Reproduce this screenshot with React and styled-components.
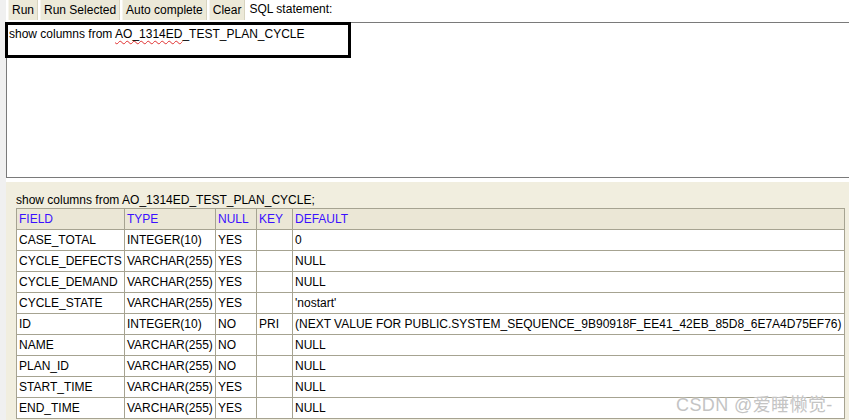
import React from 'react';
import styled, { createGlobalStyle } from 'styled-components';

const GlobalStyle = createGlobalStyle`
  html, body {
    margin: 0;
    padding: 0;
    background: #ffffff;
    overflow: hidden;
  }
  body {
    font-family: "Liberation Sans", Arial, sans-serif;
    font-size: 12px;
    color: #000;
  }
  *, *::before, *::after {
    box-sizing: border-box;
  }
`;

const Page = styled.div`
  position: relative;
  display: flex;
  width: 849px;
  height: 420px;
  overflow: hidden;
`;

const Gutter = styled.div`
  flex: 0 0 6px;
  background: #f0f0f0;
`;

const Main = styled.div`
  flex: 1 1 auto;
  display: flex;
  flex-direction: column;
  min-width: 0;
`;

const Toolbar = styled.div`
  flex: 0 0 22px;
  display: flex;
  align-items: flex-start;
  padding-left: 2px;
  gap: 2px;
`;

const ToolButton = styled.button`
  font-family: "Liberation Sans", Arial, sans-serif;
  font-size: 12px;
  color: #000;
  background: #ece9d8;
  border: none;
  border-left: 1px solid #f6f4ec;
  border-right: 1px solid #d8d4c0;
  padding: 0 3px;
  height: 20px;
  margin: 0;
  line-height: 20px;
`;

const ToolLabel = styled.span`
  line-height: 19px;
  padding-left: 2px;
`;

const Editor = styled.div`
  position: relative;
  flex: 0 0 156px;
  border-top: 1px solid #7a7a7a;
  border-left: 1px solid #7a7a7a;
  border-bottom: 1px solid #7a7a7a;
  padding: 4px 2px;
  background: #fff;
`;

const Squiggle = styled.span`
  text-decoration: underline wavy #e03030;
  text-decoration-thickness: 1px;
  text-underline-offset: 2px;
`;

const Annotation = styled.div`
  position: absolute;
  left: -2px;
  top: -1px;
  width: 346px;
  height: 36px;
  border: 3px solid #000;
`;

const Results = styled.div`
  flex: 1 1 auto;
  margin-top: 4px;
  background: #f1eedf;
  padding: 11px 0 0 10px;
`;

const Caption = styled.div`
  line-height: 15px;
  height: 15px;
`;

const Table = styled.table`
  border-collapse: collapse;
  table-layout: fixed;
  width: 828px;
  background: #fff;
`;

const Row = styled.tr`
  height: 21px;
`;

const Cell = styled.td`
  border: 1px solid #a6a391;
  padding: 0 2px;
  white-space: nowrap;
  overflow: hidden;
  line-height: 18px;
`;

const HeadCell = styled(Cell).attrs({ as: 'th' })`
  background: #ebe7d6;
  color: #3a10ff;
  font-weight: normal;
  text-align: left;
`;

const Watermark = styled.div`
  position: absolute;
  left: 676px;
  top: 390px;
  font-family: "Liberation Sans", "Noto Sans CJK SC", sans-serif;
  font-size: 18px;
  color: #c4c4c4;
  letter-spacing: 0.4px;
  text-shadow: 0 0 2px #fff;
`;

const columns = [
  { name: 'FIELD', width: 108 },
  { name: 'TYPE', width: 91 },
  { name: 'NULL', width: 41 },
  { name: 'KEY', width: 36 },
  { name: 'DEFAULT', width: 552 },
];

const rows = [
  ['CASE_TOTAL', 'INTEGER(10)', 'YES', '', '0'],
  ['CYCLE_DEFECTS', 'VARCHAR(255)', 'YES', '', 'NULL'],
  ['CYCLE_DEMAND', 'VARCHAR(255)', 'YES', '', 'NULL'],
  ['CYCLE_STATE', 'VARCHAR(255)', 'YES', '', "'nostart'"],
  ['ID', 'INTEGER(10)', 'NO', 'PRI', '(NEXT VALUE FOR PUBLIC.SYSTEM_SEQUENCE_9B90918F_EE41_42EB_85D8_6E7A4D75EF76)'],
  ['NAME', 'VARCHAR(255)', 'NO', '', 'NULL'],
  ['PLAN_ID', 'VARCHAR(255)', 'NO', '', 'NULL'],
  ['START_TIME', 'VARCHAR(255)', 'YES', '', 'NULL'],
  ['END_TIME', 'VARCHAR(255)', 'YES', '', 'NULL'],
];

const App = () => (
  <Page>
    <GlobalStyle />
    <Gutter />
    <Main>
      <Toolbar>
        <ToolButton>Run</ToolButton>
        <ToolButton>Run Selected</ToolButton>
        <ToolButton>Auto complete</ToolButton>
        <ToolButton>Clear</ToolButton>
        <ToolLabel>SQL statement:</ToolLabel>
      </Toolbar>
      <Editor>
        show columns from <Squiggle>AO_1314ED</Squiggle>_TEST_PLAN_CYCLE
        <Annotation />
      </Editor>
      <Results>
        <Caption>show columns from AO_1314ED_TEST_PLAN_CYCLE;</Caption>
        <Table>
          <colgroup>
            {columns.map((c) => (
              <col key={c.name} style={{ width: c.width }} />
            ))}
          </colgroup>
          <thead>
            <Row>
              {columns.map((c) => (
                <HeadCell key={c.name}>{c.name}</HeadCell>
              ))}
            </Row>
          </thead>
          <tbody>
            {rows.map((r) => (
              <Row key={r[0]}>
                {r.map((v, i) => (
                  <Cell key={i}>{v}</Cell>
                ))}
              </Row>
            ))}
          </tbody>
        </Table>
      </Results>
    </Main>
    <Watermark>CSDN @爱睡懒觉-</Watermark>
  </Page>
);

export default App;
